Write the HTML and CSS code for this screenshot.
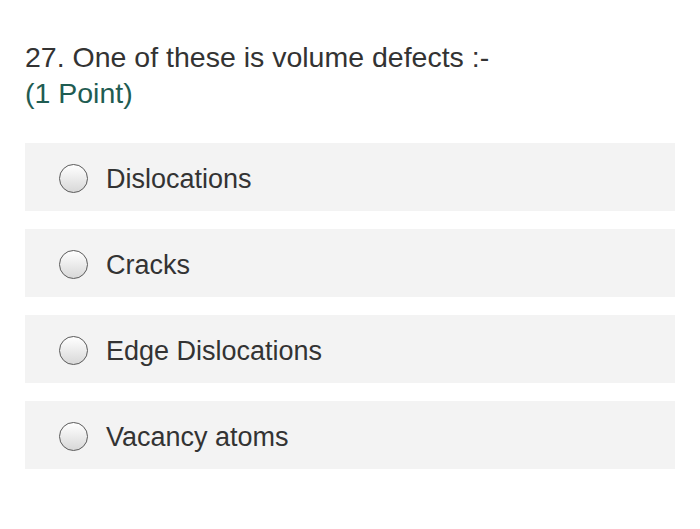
FILE: index.html
```
<!DOCTYPE html>
<html>
<head>
<meta charset="utf-8">
<link rel="stylesheet" href="styles.css">
</head>
<body>
<div class="page">
  <div class="question">
    <div class="title">27. One of these is volume defects :-</div>
    <div class="points">(1 Point)</div>
  </div>
  <div class="options">
    <div class="option"><span class="radio"></span><span class="label">Dislocations</span></div>
    <div class="option"><span class="radio"></span><span class="label">Cracks</span></div>
    <div class="option"><span class="radio"></span><span class="label">Edge Dislocations</span></div>
    <div class="option"><span class="radio"></span><span class="label">Vacancy atoms</span></div>
  </div>
</div>
</body>
</html>
```
FILE: styles.css
```
html, body {
  margin: 0;
  padding: 0;
  background: #ffffff;
}
.page {
  padding: 39px 25px 0 25px;
  font-family: "Liberation Sans", Arial, sans-serif;
}
.question {
  margin-bottom: 32px;
}
.title {
  font-size: 28.5px;
  line-height: 36px;
  color: #333333;
}
.points {
  font-size: 28.5px;
  line-height: 36px;
  color: #1f5c52;
}
.options {
  display: flex;
  flex-direction: column;
  gap: 18px;
}
.option {
  box-sizing: border-box;
  height: 68px;
  background: #f3f3f3;
  display: flex;
  align-items: center;
  padding-left: 34px;
  padding-top: 2px;
}
.radio {
  width: 27px;
  height: 27px;
  border: 1.5px solid #5a5a5a;
  border-radius: 50%;
  background: linear-gradient(#ffffff, #d8d8d8);
  flex: none;
}
.label {
  margin-left: 18px;
  padding-top: 2px;
  font-size: 27px;
  color: #333333;
}
```
